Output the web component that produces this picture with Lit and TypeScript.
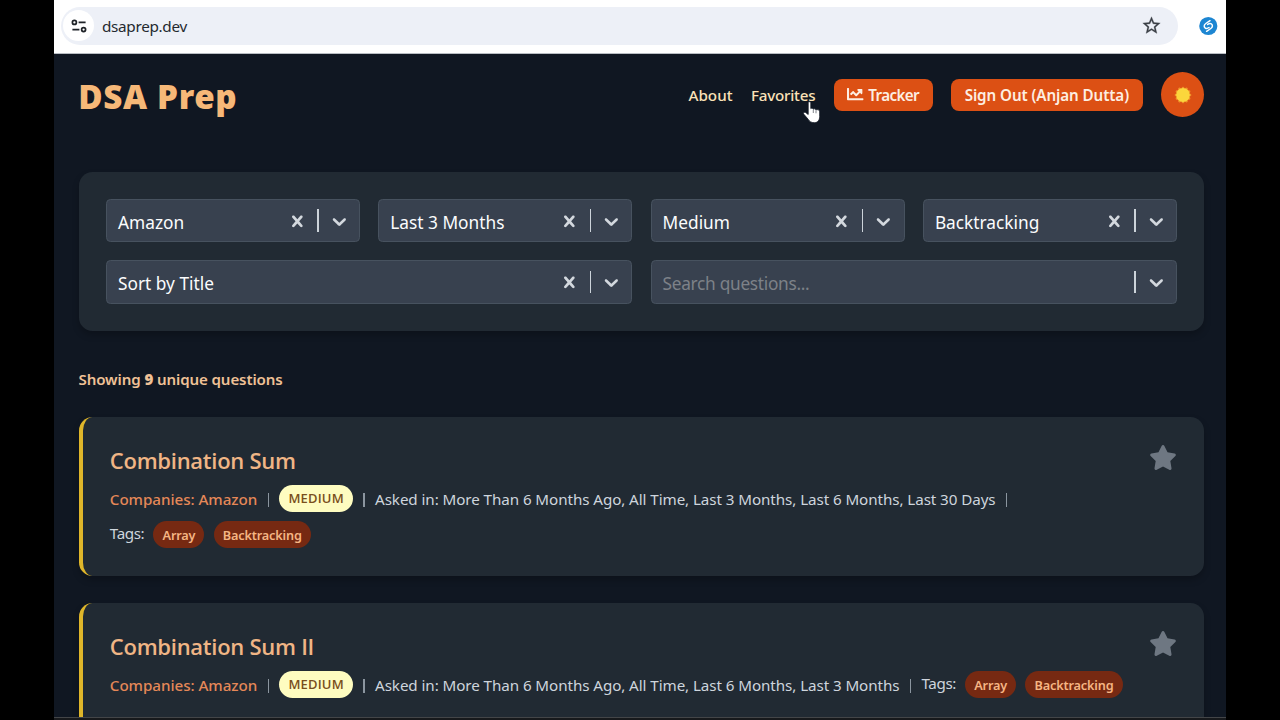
import { LitElement, html, css, svg, nothing } from "lit";
import { customElement, property } from "lit/decorators.js";

const CLEAR = "M14.348 14.849c-0.469 0.469-1.229 0.469-1.697 0l-2.651-3.030-2.651 3.029c-0.469 0.469-1.229 0.469-1.697 0-0.469-0.469-0.469-1.229 0-1.697l2.758-3.15-2.759-3.152c-0.469-0.469-0.469-1.228 0-1.697s1.228-0.469 1.697 0l2.652 3.031 2.651-3.031c0.469-0.469 1.228-0.469 1.697 0s0.469 1.229 0 1.697l-2.758 3.152 2.758 3.15c0.469 0.469 0.469 1.229 0 1.698z";
const CHEVRON = "M4.516 7.548c0.436-0.446 1.043-0.481 1.576 0l3.908 3.747 3.908-3.747c0.533-0.481 1.141-0.446 1.574 0 0.436 0.445 0.408 1.197 0 1.615-0.406 0.418-4.695 4.502-4.695 4.502-0.217 0.223-0.502 0.335-0.787 0.335s-0.57-0.112-0.789-0.335c0 0-4.287-4.084-4.695-4.502s-0.436-1.17 0-1.615z";
const STAR = "M316.9 18C311.6 7 300.4 0 288.1 0s-23.4 7-28.8 18L195 150.3 51.4 171.5c-12 1.8-22 10.2-25.7 21.7s-.7 24.2 7.9 32.7L137.8 329 113.2 474.7c-2 12 3 24.2 12.9 31.3s23 8 33.8 2.3l128.3-68.5 128.3 68.5c10.8 5.7 23.9 4.9 33.8-2.3s14.9-19.3 12.9-31.3L438.5 329 542.7 225.9c8.6-8.5 11.7-21.2 7.9-32.7s-13.7-19.9-25.7-21.7L381.2 150.3 316.9 18z";
const CHART = "M496 384H64V80c0-8.84-7.16-16-16-16H16C7.16 64 0 71.16 0 80v336c0 17.67 14.33 32 32 32h464c8.84 0 16-7.16 16-16v-32c0-8.84-7.16-16-16-16zM464 96H345.94c-21.38 0-32.09 25.85-16.97 40.97l32.4 32.4L288 242.75l-73.37-73.37c-12.5-12.5-32.76-12.5-45.25 0l-68.69 68.69c-6.25 6.25-6.25 16.38 0 22.63l22.62 22.62c6.25 6.25 16.38 6.25 22.63 0L192 237.25l73.37 73.37c12.5 12.5 32.76 12.5 45.25 0l96-96 32.4 32.4c15.12 15.12 40.97 4.41 40.97-16.97V112c.01-8.84-7.15-16-15.99-16z";

@customElement("filter-select")
class FilterSelect extends LitElement {
  @property() value = "";
  @property() placeholder = "";

  static styles = css`
    :host {
      display: flex;
      align-items: center;
      box-sizing: border-box;
      height: 43.2px;
      border: 1px solid #47525f;
      border-radius: 4.5px;
      background: #38414f;
      color: #fbfcfd;
      font-size: 17.3px;
      line-height: 24px;
    }
    .value { flex: 1; min-width: 0; padding: 4.2px 0 0 11px; white-space: nowrap; }
    .placeholder { color: #7d8188; letter-spacing: -0.3px; }
    .divider { align-self: stretch; width: 1.5px; margin: 9.2px 0; background: #ccd3da; }
    .btn { display: flex; padding: 0.6px 8.8px 0; }
    svg { width: 22.7px; height: 22.7px; fill: #d3d8de; }
  `;

  render() {
    return html`
      <span class="value ${this.value ? "" : "placeholder"}">${this.value || this.placeholder}</span>
      ${this.value ? html`<span class="btn"><svg viewBox="0 0 20 20"><path d=${CLEAR}></path></svg></span>` : nothing}
      <span class="divider"></span>
      <span class="btn"><svg viewBox="0 0 20 20"><path d=${CHEVRON}></path></svg></span>
    `;
  }
}

@customElement("question-card")
class QuestionCard extends LitElement {
  @property() name = "";
  @property() asked = "";
  @property({ attribute: false }) tags: string[] = [];

  static styles = css`
    :host {
      display: block;
      box-sizing: border-box;
      height: 159px;
      padding: 27px 26.5px 0 26.8px;
      border-left: 4.5px solid #dfb62a;
      border-radius: 13.6px;
      background: #212a33;
      box-shadow: 0 4px 7px rgba(0, 0, 0, 0.22);
    }
    .head { display: flex; justify-content: space-between; height: 32px; }
    h2 { margin: 0; font-family: "Open Sans", sans-serif; font-size: 22px; font-weight: 600; line-height: 33px; letter-spacing: -0.27px; color: #f0b585; }
    .star { width: 28px; height: 25px; margin: 1px 0.2px 0 0; fill: #6e7782; }
    .meta {
      display: flex;
      flex-wrap: wrap;
      align-items: center;
      gap: 9.2px;
      margin-top: 9.2px;
      font-size: 15.2px;
      line-height: 27px;
      white-space: nowrap;
      color: #ced5dd;
    }
    .companies { padding-top: 1px; margin-bottom: -1px; font-weight: 500; letter-spacing: -0.05px; color: #e58858; }
    .bar { width: 1.3px; height: 14px; margin: 3px 1.2px 0; background: #8b959f; }
    .level {
      padding: 0 9.2px;
      border-radius: 14px;
      background: #fefcc0;
      color: #7a4f1c;
      font-family: "Open Sans", sans-serif;
      font-size: 13px;
      font-weight: 600;
      letter-spacing: 0.16px;
    }
    .asked { padding-top: 1px; margin-bottom: -1px; letter-spacing: -0.078px; }
    .tags { display: flex; align-items: center; gap: 9.2px; }
    .label { margin-top: -2px; letter-spacing: -0.4px; }
    .tag {
      padding: 1px 9.1px 0;
      line-height: 26.4px;
      border-radius: 14px;
      background: #762912;
      color: #f5b583;
      font-size: 12.7px;
      font-weight: 600;
      letter-spacing: -0.16px;
    }
  `;

  render() {
    return html`
      <div class="head">
        <h2>${this.name}</h2>
        <svg class="star" viewBox="0 0 576 512"><path d=${STAR}></path></svg>
      </div>
      <div class="meta">
        <span class="companies">Companies: Amazon</span>
        <span class="bar"></span>
        <span class="level">MEDIUM</span>
        <span class="bar"></span>
        <span class="asked">Asked in: ${this.asked}</span>
        <span class="bar"></span>
        <span class="tags">
          <span class="label">Tags:</span>
          ${this.tags.map((t) => html`<span class="tag">${t}</span>`)}
        </span>
      </div>
    `;
  }
}

@customElement("app-root")
class AppRoot extends LitElement {
  static styles = css`
    :host {
      display: block;
      position: relative;
      width: 1280px;
      height: 720px;
      overflow: hidden;
      background: #000;
      font-family: "Noto Sans", "Open Sans", sans-serif;
    }
    .window { width: 1172px; height: 720px; margin: 0 auto; display: flex; flex-direction: column; background: #101722; }
    .toolbar {
      flex: none;
      display: flex;
      align-items: center;
      justify-content: space-between;
      box-sizing: border-box;
      height: 54px;
      padding: 0 8px 2px 7px;
      border-bottom: 1px solid #b9bdc3;
      background: #fff;
    }
    .address {
      display: flex;
      align-items: center;
      box-sizing: border-box;
      width: 1117px;
      height: 38px;
      padding: 0 16px 0 2px;
      border-radius: 19px;
      background: #edf0f7;
    }
    .site { display: flex; align-items: center; justify-content: center; width: 31px; height: 31px; border-radius: 50%; background: #fff; }
    .url { flex: 1; padding-left: 8px; font-size: 15.3px; line-height: 24px; letter-spacing: -0.32px; color: #24292f; }
    .page { flex: none; height: 663px; overflow: hidden; box-sizing: border-box; padding: 0 22px 0 25px; }
    header { display: flex; align-items: center; height: 81px; }
    h1 {
      flex: 1;
      margin: 0 0 0 -0.8px;
      padding-top: 4px;
      font-size: 33.2px;
      font-weight: 900;
      letter-spacing: 0.65px;
      line-height: 44px;
      color: #f6b878;
    }
    nav { display: flex; align-items: center; gap: 18.4px; font-size: 15.2px; font-weight: 500; line-height: 32px; color: #fbe2b8; }
    .favorites { letter-spacing: -0.22px; }
    .button { display: flex; align-items: center; padding: 0 13.6px; border-radius: 8px; background: #dc5014; color: #fdeee2; font-weight: 600; white-space: nowrap; }
    .tracker { letter-spacing: -0.62px; gap: 4.6px; }
    .signout { letter-spacing: -0.08px; }
    .chart { width: 16.4px; height: 16.4px; fill: currentColor; }
    .theme { display: flex; align-items: center; justify-content: center; width: 43px; height: 45px; border-radius: 50%; background: #dc5014; }
    .filters {
      display: grid;
      grid-template-columns: repeat(4, 1fr);
      gap: 18.2px;
      margin-top: 37px;
      padding: 27px;
      border-radius: 13.6px;
      background: #212a33;
      box-shadow: 0 4px 7px rgba(0, 0, 0, 0.22);
    }
    .wide { grid-column: span 2; }
    .count { margin: 35px 0 25px -0.5px; font-size: 15.1px; font-weight: 600; line-height: 26px; letter-spacing: -0.11px; color: #efc196; }
    .cards { display: grid; gap: 27px; }
    .cursor { position: absolute; left: 801.5px; top: 101px; width: 19px; height: 23px; }
    .player { flex: none; height: 3px; box-sizing: border-box; border-top: 1px solid #434548; background: #17191c; }
  `;

  render() {
    const rays = Array.from({ length: 12 }, (_, i) => svg`<circle cx="12" cy="5" r="1.3" transform="rotate(${i * 30} 12 12)"></circle>`);
    return html`
      <div class="window">
        <div class="toolbar">
          <div class="address">
            <span class="site">
              <svg width="16" height="14" viewBox="0 0 16 14" fill="none" stroke="#1f2328" stroke-width="1.7">
                <circle cx="3.4" cy="3.4" r="2"></circle><path d="M7.6 3.4H14.6M1.4 10.6H8.4"></path><circle cx="12.6" cy="10.6" r="2"></circle>
              </svg>
            </span>
            <span class="url">dsaprep.dev</span>
            <svg width="21" height="21" viewBox="0 0 24 24" fill="#3a3f45" stroke="#3a3f45" stroke-width=".3"><path d="M22 9.24l-7.19-.62L12 2 9.19 8.63 2 9.24l5.46 4.73L5.82 21 12 17.27 18.18 21l-1.63-7.03L22 9.24zM12 15.4l-3.76 2.27 1-4.28-3.32-2.88 4.38-.38L12 6.1l1.71 4.04 4.38.38-3.32 2.88 1 4.28L12 15.4z"></path></svg>
          </div>
          <svg width="20" height="20" viewBox="0 0 20 20">
            <circle cx="10.3" cy="10" r="9.1" fill="#1d86d2"></circle>
            <path d="M12 4.700 7.800 7.500C5.600 9 5.900 11.200 7.300 12.100 8.600 12.900 9.800 12.400 11 11.500M8.600 15.300l4.200-2.800C15 11 14.700 8.800 13.300 7.900 12 7.100 10.800 7.600 9.600 8.500" fill="none" stroke="#fff" stroke-width="1.5" stroke-linecap="round"></path>
          </svg>
        </div>
        <div class="page">
          <header>
            <h1>DSA Prep</h1>
            <nav>
              <span>About</span>
              <span class="favorites">Favorites</span>
              <span class="button tracker"><svg class="chart" viewBox="0 0 512 512"><path d=${CHART}></path></svg>Tracker</span>
              <span class="button signout">Sign Out (Anjan Dutta)</span>
              <span class="theme">
                <svg width="24" height="24" viewBox="0 0 24 24"><g fill="#f0922a">${rays}</g><circle cx="12" cy="12" r="6.9" fill="#fbd63c"></circle></svg>
              </span>
            </nav>
          </header>
          <section class="filters">
            <filter-select value="Amazon"></filter-select>
            <filter-select value="Last 3 Months"></filter-select>
            <filter-select value="Medium"></filter-select>
            <filter-select value="Backtracking"></filter-select>
            <filter-select class="wide" value="Sort by Title"></filter-select>
            <filter-select class="wide" placeholder="Search questions..."></filter-select>
          </section>
          <p class="count">Showing <b>9</b> unique questions</p>
          <div class="cards">
            <question-card name="Combination Sum" asked="More Than 6 Months Ago, All Time, Last 3 Months, Last 6 Months, Last 30 Days" .tags=${["Array", "Backtracking"]}></question-card>
            <question-card name="Combination Sum II" asked="More Than 6 Months Ago, All Time, Last 6 Months, Last 3 Months" .tags=${["Array", "Backtracking"]}></question-card>
          </div>
        </div>
        <div class="player"></div>
      </div>
      <svg class="cursor" viewBox="0 0 19 23">
        <path d="M6.200 1.600C6.200.5 8.700.4 8.800 1.700V7.600C9.300 6.900 11 7 11.300 8.200 12 7.500 13.600 7.700 13.900 8.900 14.900 8.400 17.600 8.300 17.700 10.800V15.500C17.600 19.500 15.500 21.700 12.300 21.700 9.200 21.700 7.600 20.500 6.300 18.400L1.700 13.100C.8 11.800 2.500 10.600 3.900 11.700L6.200 13.500Z" fill="#fff" stroke="#101722" stroke-width=".8"></path>
        <path d="M11.300 8.500V12M14 9.300V12.300" stroke="#4a5059" stroke-width=".7" fill="none"></path>
      </svg>
    `;
  }
}
